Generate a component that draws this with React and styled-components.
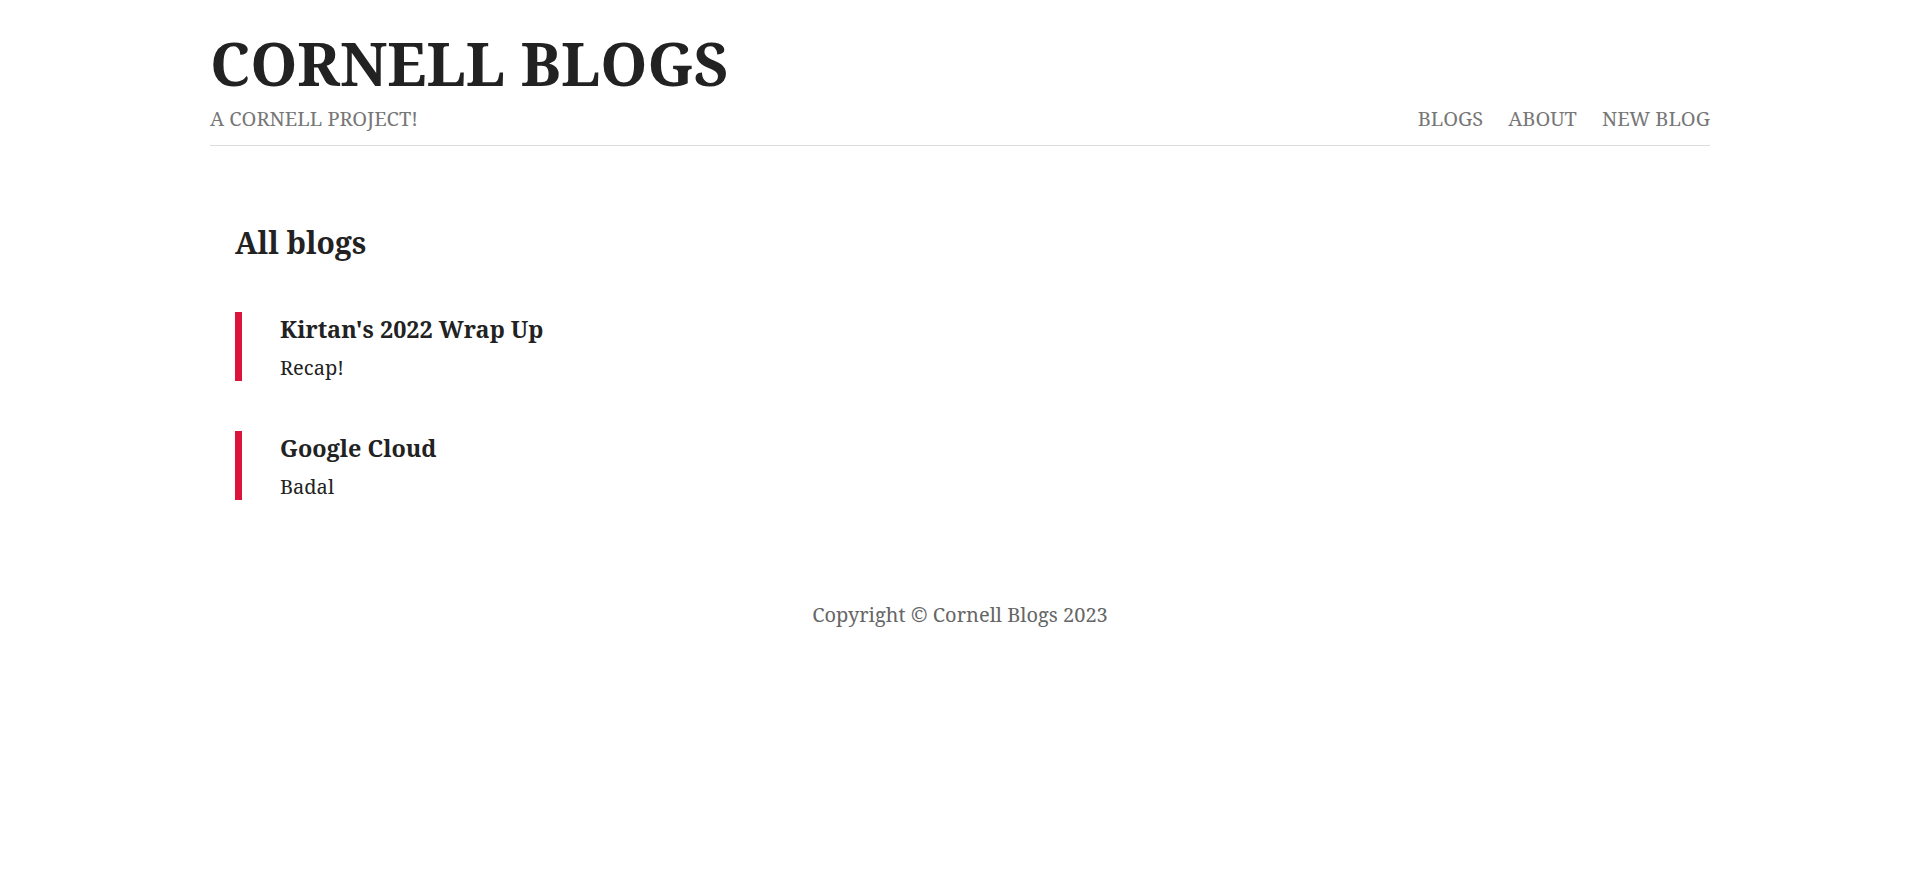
import { Fragment } from 'react'
import styled, { createGlobalStyle } from 'styled-components'

const GlobalStyle = createGlobalStyle`
  body {
    margin: 0;
    background: #fff;
    color: #222;
    font-family: "Noto Serif", "DejaVu Serif", "Liberation Serif", serif;
  }
`

const Page = styled.div`
  width: 1500px;
  margin: 0 auto;
`

const Header = styled.header`
  display: flex;
  justify-content: space-between;
  align-items: flex-end;
  padding-top: 27px;
  padding-bottom: 14px;
  border-bottom: 1px solid #ddd;
`

const Brand = styled.div`
  display: flex;
  flex-direction: column;
  row-gap: 8px;
`

const Title = styled.h1`
  margin: 0;
  font-size: 60px;
  line-height: 72px;
  font-weight: 700;
  color: #222;
`

const Subtitle = styled.div`
  font-size: 20px;
  line-height: 24px;
  color: #777;
  text-transform: uppercase;
`

const Nav = styled.nav`
  display: flex;
  column-gap: 25px;
`

const NavLink = styled.a`
  font-size: 20px;
  line-height: 24px;
  color: #777;
  text-decoration: none;
`

const Main = styled.main`
  padding: 79px 25px 0;
`

const Heading = styled.h2`
  margin: 0 0 51px;
  font-size: 30px;
  line-height: 36px;
  font-weight: 700;
`

const BlogList = styled.div`
  display: flex;
  flex-direction: column;
  row-gap: 50px;
`

const BlogItem = styled.div`
  border-left: 7px solid #dc143c;
  padding: 3px 0 1px 38px;
`

const BlogTitle = styled.h3`
  margin: 0;
  font-size: 23.4px;
  line-height: 28px;
  font-weight: 700;
`

const BlogText = styled.p`
  margin: 13px 0 0;
  font-size: 20px;
  line-height: 24px;
`

const Footer = styled.footer`
  padding-top: 103px;
  text-align: center;
  font-size: 20px;
  line-height: 24px;
  color: #666;
`

const blogs = [
  { title: "Kirtan's 2022 Wrap Up", text: 'Recap!' },
  { title: 'Google Cloud', text: 'Badal' }
]

const App = () => {
  return (
    <Fragment>
      <GlobalStyle />
      <Page>
        <Header>
          <Brand>
            <Title>CORNELL BLOGS</Title>
            <Subtitle>A Cornell Project!</Subtitle>
          </Brand>
          <Nav>
            <NavLink href='#'>BLOGS</NavLink>
            <NavLink href='#'>ABOUT</NavLink>
            <NavLink href='#'>NEW BLOG</NavLink>
          </Nav>
        </Header>
        <Main>
          <Heading>All blogs</Heading>
          <BlogList>
            {blogs.map(b => (
              <BlogItem key={b.title}>
                <BlogTitle>{b.title}</BlogTitle>
                <BlogText>{b.text}</BlogText>
              </BlogItem>
            ))}
          </BlogList>
        </Main>
        <Footer>Copyright © Cornell Blogs 2023</Footer>
      </Page>
    </Fragment>
  )
}

export default App
